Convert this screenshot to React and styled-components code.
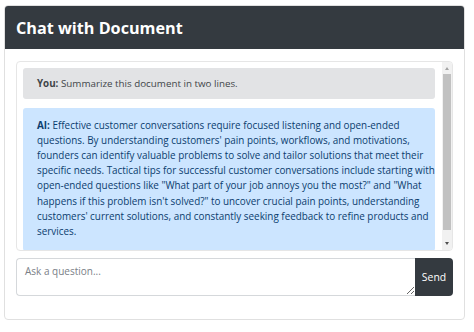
import styled, { createGlobalStyle } from "styled-components"

const GlobalStyle = createGlobalStyle`
  *, *::before, *::after {
    box-sizing: border-box;
  }
  body {
    margin: 0;
    background: #ffffff;
    font-family: "Open Sans", "Noto Sans", "Liberation Sans", sans-serif;
  }
`;

const Page = styled.div`
  padding: 5px 9px 0 4px;
`;

const Card = styled.div`
  border: 1px solid #e0e0e0;
  border-radius: 4px;
  overflow: hidden;
  background: #fff;
`;

const Header = styled.div`
  background-color: #343a40;
  color: #fff;
  height: 43px;
  display: flex;
  align-items: center;
  padding: 0 11px;
`;

const Title = styled.h1`
  margin: 0;
  font-size: 16.2px;
  font-weight: 700;
`;

const Body = styled.div`
  padding: 12px 11px 23px 11px;
`;

const ChatFrame = styled.div`
  height: 190px;
  border: 1px solid #e6e6e6;
  border-radius: 4px;
  display: flex;
  overflow: hidden;
`;

const Messages = styled.div`
  flex: 1;
  min-width: 0;
  overflow: hidden;
  padding: 6px 7px 6px 6px;
  display: flex;
  flex-direction: column;
  gap: 9px;
`;

const Message = styled.div`
  flex: none;
  border-radius: 3px;
  font-size: ${(p) => (p.$ai ? "9.9px" : "9.8px")};
  line-height: 15.1px;
  padding: ${(p) => (p.$ai ? "10px 0 12px 14px" : "8px 14px")};
  background: ${(p) => (p.$ai ? "#cce5ff" : "#e2e3e5")};
  color: ${(p) => (p.$ai ? "#0b3d6e" : "#3f4549")};
`;

const Line = styled.span`
  display: block;
  white-space: nowrap;
`;

const Who = styled.b`
  font-weight: 700;
`;

const ScrollTrack = styled.div`
  width: 10px;
  flex: none;
  background: #f1f1f1;
  display: flex;
  flex-direction: column;
  align-items: center;
  padding: 3px 0;
`;

const Arrow = styled.div`
  width: 0;
  height: 0;
  border-left: 2.5px solid transparent;
  border-right: 2.5px solid transparent;
  ${(p) =>
    p.$down
      ? "border-top: 3px solid #505050;"
      : "border-bottom: 3px solid #a3a3a3;"}
  margin: 2px 0;
`;

const Thumb = styled.div`
  width: 8px;
  height: 156px;
  margin-top: 2px;
  background: #c1c1c1;
`;

const Spacer = styled.div`
  flex: 1;
`;

const InputRow = styled.form`
  display: flex;
  margin-top: 7px;
  height: 38px;
`;

const Question = styled.textarea`
  flex: 1;
  border: 1px solid #d5d8db;
  border-right: none;
  border-radius: 4px 0 0 4px;
  padding: 5px 8px;
  font-family: inherit;
  font-size: 10px;
  color: #495057;
  resize: vertical;
  outline: none;

  &::placeholder {
    color: #7a8087;
  }
`;

const SendButton = styled.button`
  width: 38px;
  border: none;
  border-radius: 0 4px 4px 0;
  background-color: #343a40;
  color: #fff;
  font-family: inherit;
  font-size: 10.4px;
  padding: 0;
  cursor: pointer;
`;

const answerLines = [
  "Effective customer conversations require focused listening and open-ended",
  "questions. By understanding customers' pain points, workflows, and motivations,",
  "founders can identify valuable problems to solve and tailor solutions that meet their",
  "specific needs. Tactical tips for successful customer conversations include starting with",
  "open-ended questions like \"What part of your job annoys you the most?\" and \"What",
  "happens if this problem isn't solved?\" to uncover crucial pain points, understanding",
  "customers' current solutions, and constantly seeking feedback to refine products and",
  "services.",
];

export default function App() {
  return (
    <>
      <GlobalStyle />
      <Page>
        <Card>
          <Header>
            <Title>Chat with Document</Title>
          </Header>
          <Body>
            <ChatFrame>
              <Messages>
                <Message>
                  <Who>You:</Who> Summarize this document in two lines.
                </Message>
                <Message $ai>
                  {answerLines.map((text, i) => (
                    <Line key={i}>
                      {i === 0 && <Who>AI: </Who>}
                      {text}
                    </Line>
                  ))}
                </Message>
              </Messages>
              <ScrollTrack>
                <Arrow />
                <Thumb />
                <Spacer />
                <Arrow $down />
              </ScrollTrack>
            </ChatFrame>
            <InputRow onSubmit={(e) => e.preventDefault()}>
              <Question placeholder="Ask a question..." />
              <SendButton type="submit">Send</SendButton>
            </InputRow>
          </Body>
        </Card>
      </Page>
    </>
  )
}
